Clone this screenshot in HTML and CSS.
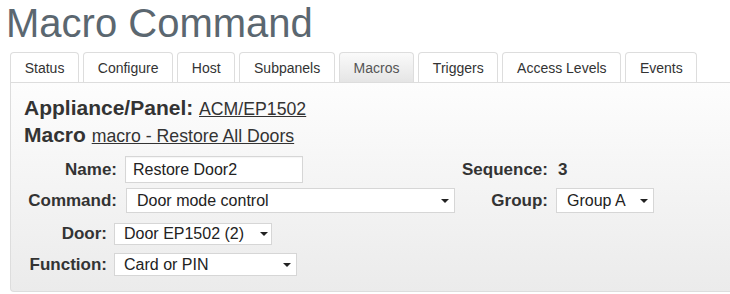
FILE: index.html
```html
<!DOCTYPE html>
<html lang="en">
<head>
    <meta charset="UTF-8">
    <meta name="viewport" content="width=device-width, initial-scale=1.0">
    <title>Macro Command</title>
    <link rel="stylesheet" href="styles.css">
</head>
<body>
    <h1>Macro Command</h1>
    <ul class="tabs">
        <li>Status</li>
        <li>Configure</li>
        <li>Host</li>
        <li>Subpanels</li>
        <li class="active">Macros</li>
        <li>Triggers</li>
        <li>Access Levels</li>
        <li>Events</li>
    </ul>
    <div class="panel">
        <div class="heading">Appliance/Panel: <a href="#">ACM/EP1502</a></div>
        <div class="heading">Macro <a href="#">macro - Restore All Doors</a></div>

        <div class="fields">
            <label for="name">Name:</label>
            <div><input type="text" id="name" class="text-input" value="Restore Door2"></div>
            <label>Sequence:</label>
            <div class="value">3</div>

            <label for="command">Command:</label>
            <div>
                <span class="select command">
                    <select id="command"><option>Door mode control</option></select>
                </span>
            </div>
            <label for="group">Group:</label>
            <div>
                <span class="select group">
                    <select id="group"><option>Group A</option></select>
                </span>
            </div>
        </div>

        <div class="fields short">
            <label for="door">Door:</label>
            <div>
                <span class="select door">
                    <select id="door"><option>Door EP1502 (2)</option></select>
                </span>
            </div>

            <label for="function">Function:</label>
            <div>
                <span class="select function">
                    <select id="function"><option>Card or PIN</option></select>
                </span>
            </div>
        </div>
    </div>
</body>
</html>
```

FILE: styles.css
```css
body { margin: 0; font-family: "Liberation Sans", Arial, sans-serif; color: #333; background: #fff; overflow: hidden; }
h1 { margin: 0 0 6px 6px; font-size: 40px; font-weight: normal; line-height: 46px; color: #5b6770; }

.tabs { display: flex; margin: 0 0 0 10px; padding: 0; list-style: none; }
.tabs li {
    margin-right: 4px;
    padding: 2px 13.7px 0;
    line-height: 27px;
    font-size: 14px;
    border: 1px solid #ddd;
    border-bottom: none;
    border-radius: 4px 4px 0 0;
    background: #fff;
}
.tabs li.active { background: linear-gradient(#fafafa, #e5e5e5); color: #555; }

/* panel runs on past the right edge of the window, so no right border */
.panel {
    margin-left: 10px;
    padding: 12px 13px 11px;
    border: 1px solid #ddd;
    border-right: none;
    border-bottom-left-radius: 4px;
    background: linear-gradient(#fdfdfd, #ebebeb);
}
.heading { font-size: 21px; font-weight: bold; line-height: 26px; }
.heading a { font-size: 17.7px; font-weight: normal; color: #333; }

.fields {
    display: grid;
    grid-template-columns: 101px 337px 94px auto;
    grid-auto-rows: 31px;
    align-items: center;
    margin-top: 5px;
}
.fields label, .fields .value { font-size: 17px; font-weight: bold; }
.fields label { text-align: right; padding-right: 8px; }
.fields .value { padding-left: 2px; }
.fields.short { grid-template-columns: 90px auto; margin-top: 2px; }
.fields.short label { padding-right: 7px; }

.text-input {
    display: block;
    box-sizing: border-box;
    width: 178px;
    height: 27px;
    padding: 0 7px;
    border: 1px solid #d6d6d6;
    box-shadow: inset 0 1px 1px rgba(0,0,0,0.04);
    font: 16px "Liberation Sans", Arial, sans-serif;
    color: #222;
    background: #fff;
}

.select { position: relative; display: inline-block; vertical-align: middle; }
.select select {
    display: block;
    box-sizing: border-box;
    appearance: none;
    -webkit-appearance: none;
    height: 25px;
    padding: 0 0 0 10px;
    border: 1px solid #d6d6d6;
    border-radius: 0;
    font: 16px "Liberation Sans", Arial, sans-serif;
    color: #222;
    background: #fff;
}
.select::after {
    content: "";
    position: absolute;
    right: 6px;
    top: 50%;
    margin-top: -2px;
    border-left: 4px solid transparent;
    border-right: 4px solid transparent;
    border-top: 4px solid #222;
    pointer-events: none;
}
.select.command { margin-left: 1px; }
.select.command select { width: 329px; }
.select.group select { width: 98px; }
.select.door select { width: 158px; height: 22px; padding-left: 9px; }
.select.function select { width: 183px; height: 23px; padding-left: 9px; }
.select.door::after { right: 4px; }
```
